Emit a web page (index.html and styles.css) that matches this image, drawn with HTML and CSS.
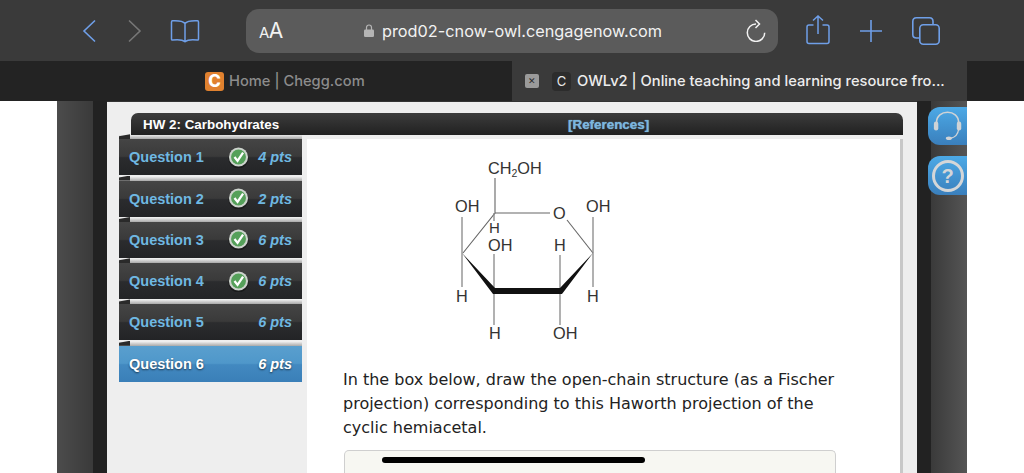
FILE: index.html
```html
<!DOCTYPE html>
<html lang="en">
<head>
<meta charset="UTF-8">
<meta name="viewport" content="width=device-width, initial-scale=1.0">
<title>OWLv2 | Online teaching and learning resource</title>
<link rel="stylesheet" href="styles.css">
</head>
<body>

<header class="toolbar">
  <div class="nav-icons">
    <svg class="icon-back" width="14" height="24" viewBox="0 0 14 24"><path d="M13 1.5 2 12l11 10.5" fill="none" stroke="#6f9fe8" stroke-width="1.6"/></svg>
    <svg class="icon-forward" width="14" height="24" viewBox="0 0 14 24"><path d="M1 1.5 12 12 1 22.5" fill="none" stroke="#777" stroke-width="1.6"/></svg>
    <svg class="icon-book" width="30" height="24" viewBox="0 0 30 24"><path d="M15 4.5C13 2 9 1.5 2.500 1.800Q1.500 1.900 1.500 3V20Q1.500 21.200 2.700 21.100C8 20.500 12.500 20.700 15 22.700C17.500 20.700 22 20.500 27.300 21.100Q28.500 21.200 28.500 20V3Q28.500 1.900 27.500 1.800C21 1.500 17 2 15 4.500ZM15 4.500V22.700" fill="none" stroke="#6f9fe8" stroke-width="1.500"/></svg>
  </div>
  <div class="url-bar">
    <span class="aa"><small>A</small>A</span>
    <div class="url">
      <svg width="10" height="13" viewBox="0 0 10 13"><path d="M2.500 6V3.500a2.500 2.500 0 0 1 5 0V6" fill="none" stroke="#b5b5b5" stroke-width="1.200"/><rect y="5.500" width="10" height="7.500" rx="1.300" fill="#b5b5b5"/></svg>
      <span>prod02-cnow-owl.cengagenow.com</span>
    </div>
    <svg class="icon-reload" width="20" height="23" viewBox="0 0 20 23"><path d="M10 5A8.700 8.700 0 1 0 18.700 13.700" fill="none" stroke="#f2f2f2" stroke-width="1.500"/><path d="M9.500 1 13.500 5 9.500 9" fill="none" stroke="#f2f2f2" stroke-width="1.500"/></svg>
  </div>
  <div class="action-icons">
    <svg width="24" height="30" viewBox="0 0 24 30"><path d="M7.500 10H3Q1 10 1 12V26.500Q1 28.500 3 28.500H21Q23 28.500 23 26.500V12Q23 10 21 10H16.500M12 19V1M7 5.500 12 1l5 4.500" fill="none" stroke="#6f9fe8" stroke-width="1.500"/></svg>
    <svg width="22" height="22" viewBox="0 0 22 22"><path d="M11 0V22M0 11H22" fill="none" stroke="#6f9fe8" stroke-width="1.600"/></svg>
    <svg width="28" height="28" viewBox="0 0 28 28"><rect x="7.800" y="7.800" width="19.400" height="19.400" rx="3.500" fill="none" stroke="#6f9fe8" stroke-width="1.600"/><path d="M7.500 21H4.500Q.8 21 .8 17.500V4.500Q.8.800 4.500.8H17.500Q21 .8 21 4.500V7.500" fill="none" stroke="#6f9fe8" stroke-width="1.600"/></svg>
  </div>
</header>

<nav class="tabs">
  <div class="tab tab-home">
    <span class="favicon-chegg">C</span>
    <span>Home | Chegg.com</span>
  </div>
  <div class="tab tab-active">
    <span class="tab-close">&#10005;</span>
    <span class="favicon-owl">C</span>
    <span>OWLv2 | Online teaching and learning resource fro...</span>
  </div>
</nav>

<div class="site">
  <div class="site-inner">
    <div class="panel">
      <div class="hw-bar">
        <span class="hw-title">HW 2: Carbohydrates</span>
        <span class="hw-refs">[References]</span>
      </div>
      <div class="panel-body">
        <ul class="questions">
          <li class="question"><span class="q-name">Question 1</span><svg class="check" viewBox="0 0 22 22"><use href="#check-mark"/></svg><span class="q-pts">4 pts</span></li>
          <li class="question"><span class="q-name">Question 2</span><svg class="check" viewBox="0 0 22 22"><use href="#check-mark"/></svg><span class="q-pts">2 pts</span></li>
          <li class="question"><span class="q-name">Question 3</span><svg class="check" viewBox="0 0 22 22"><use href="#check-mark"/></svg><span class="q-pts">6 pts</span></li>
          <li class="question"><span class="q-name">Question 4</span><svg class="check" viewBox="0 0 22 22"><use href="#check-mark"/></svg><span class="q-pts">6 pts</span></li>
          <li class="question"><span class="q-name">Question 5</span><span class="q-pts">6 pts</span></li>
          <li class="question current"><span class="q-name">Question 6</span><span class="q-pts">6 pts</span></li>
        </ul>
        <main class="content">
          <svg class="haworth" width="200" height="200" viewBox="0 0 200 200">
            <g fill="none" stroke="#666" stroke-width="1.100">
              <path d="M65 28V63L33 103"/>
              <path d="M65 63H120"/>
              <path d="M137 70 163 103"/>
            </g>
            <g fill="none" stroke="#888" stroke-width="1.300">
              <path d="M32 67V137M163 67V137"/>
              <path d="M64 63V71M64 104V141M130 105V141"/>
              <path d="M64 143V175M130 143V175"/>
            </g>
            <path d="M32 103 65 138H130L163 103 132 144H63Z" fill="#111"/>
            <g class="atom">
              <text x="58" y="24">CH<tspan class="sub" dy="3">2</tspan><tspan dy="-3">OH</tspan></text>
              <text x="25" y="62">OH</text>
              <text x="123" y="69">O</text>
              <text x="156" y="62">OH</text>
              <text class="atom-small" x="59" y="83">H</text>
              <text x="58" y="101">OH</text>
              <text x="124" y="101">H</text>
              <text x="26" y="152">H</text>
              <text x="157" y="152">H</text>
              <text x="59" y="189">H</text>
              <text x="123" y="189">OH</text>
            </g>
          </svg>
          <p class="prompt">In the box below, draw the open-chain structure (as a Fischer projection) corresponding to this Haworth projection of the cyclic hemiacetal.</p>
          <div class="answer-box"><div class="answer-bar"></div></div>
        </main>
      </div>
    </div>
  </div>
</div>

<a class="side-btn side-support">
  <svg width="30" height="30" viewBox="0 0 34 34"><path d="M4 18V13C4 5.500 10 1.500 16.500 1.500S29 5.500 29 13V18" fill="none" stroke="#cfd3d6" stroke-width="1.800"/><rect x="1" y="12" width="5" height="10" rx="2.500" fill="#cfd3d6"/><rect x="27" y="12" width="5" height="10" rx="2.500" fill="#cfd3d6"/><path d="M29 21Q28 29 20 31" fill="none" stroke="#cfd3d6" stroke-width="1.500"/><ellipse cx="18" cy="31" rx="3.500" ry="2" fill="#cfd3d6"/></svg>
</a>
<a class="side-btn side-help"><span class="help-mark">?</span></a>

<svg class="defs" width="0" height="0">
  <defs>
    <g id="check-mark">
      <circle cx="11" cy="12" r="10.500" fill="#111" opacity=".55"/>
      <circle cx="11" cy="10.500" r="10" fill="#CDD3CD"/>
      <circle cx="11" cy="10.500" r="7.800" fill="#55A05A"/>
      <path d="M6.800 10.500 10 14.500 15.800 6" fill="none" stroke="#fff" stroke-width="2.400"/>
    </g>
  </defs>
</svg>

</body>
</html>
```

FILE: styles.css
```css
* {
  box-sizing: border-box;
}

html, body {
  height: 100%;
}

body {
  margin: 0;
  overflow: hidden;
  background-color: #FFFFFF;
  font-family: "Liberation Sans", Arial, sans-serif;
}

/* browser chrome */
.toolbar {
  display: flex;
  align-items: center;
  height: 61px;
  padding-left: 82px;
  background-color: #3A3A3A;
}

.nav-icons {
  display: flex;
  align-items: center;
  width: 164px;
}

.nav-icons svg {
  display: block;
}

.icon-forward {
  margin-left: 32px;
}

.icon-book {
  margin-left: 28px;
}

.url-bar {
  display: flex;
  align-items: center;
  width: 532px;
  height: 44px;
  padding: 0 12px 0 13px;
  border-radius: 13px;
  background-color: #5B5B5B;
  color: #F2F2F2;
}

.aa {
  width: 105px;
  font-family: Inter, sans-serif;
  font-size: 21px;
  letter-spacing: -0.5px;
}

.aa small {
  font-size: 15px;
}

.url {
  display: flex;
  align-items: center;
  gap: 8px;
  flex: 1;
  font-family: Inter, sans-serif;
  font-size: 16.300px;
}

.icon-reload {
  flex: none;
}

.action-icons {
  display: flex;
  align-items: center;
  gap: 30px;
  margin-left: 28px;
}

.action-icons svg:first-child {
  margin-bottom: 2px;
}

.tabs {
  display: flex;
  height: 40px;
  background-color: #232323;
  font-family: Inter, sans-serif;
  font-size: 14.700px;
  font-weight: 500;
}

.tab {
  display: flex;
  align-items: center;
}

.tab-home {
  width: 512px;
  padding-left: 205px;
  gap: 5px;
  color: #8C8C8C;
}

.favicon-chegg {
  width: 19px;
  height: 19px;
  border-radius: 3px;
  background-color: #E0812F;
  color: #FFFFFF;
  font-size: 17px;
  font-weight: 800;
  line-height: 19px;
  text-align: center;
}

.tab-active {
  width: 455px;
  padding-left: 13px;
  background-color: #3A3A3A;
  color: #EDEDED;
}

.tab-close {
  width: 14px;
  height: 14px;
  margin-right: 13px;
  border-radius: 2px;
  background-color: #9A9A9A;
  color: #2A2A2A;
  font-size: 9px;
  line-height: 14px;
  text-align: center;
}

.favicon-owl {
  width: 19px;
  height: 19px;
  margin-right: 6px;
  border-radius: 4px;
  background-color: #2C2C2C;
  color: #E8E8E8;
  font-size: 13px;
  font-weight: 400;
  line-height: 19px;
  text-align: center;
}

/* page */
.site {
  width: 910px;
  height: 372px;
  margin-left: 57px;
  padding: 0 36px;
  background: linear-gradient(90deg, #4C4C4C 0, #3A3A3A 36px, #3A3A3A 874px, #555555 100%);
}

.site-inner {
  height: 100%;
  padding: 0 14px;
  background-color: #222222;
}

.panel {
  height: 100%;
  padding: 12px 14px 0 12px;
  border-top: 1px solid #333333;
  background-color: #EEEEEE;
}

.hw-bar {
  display: flex;
  align-items: center;
  height: 22px;
  margin-top: -1px;
  margin-left: 12px;
  padding-left: 12px;
  border-radius: 7px 7px 0 0;
  background: linear-gradient(#3C3C3C, #212121);
  font-weight: bold;
}

.hw-title {
  width: 425px;
  color: #FFFFFF;
  font-size: 13.400px;
}

.hw-refs {
  color: #7BB6DE;
  font-size: 13.400px;
  text-shadow: 0 0 1px #7BB6DE;
}

.panel-body {
  display: flex;
  align-items: flex-start;
  margin-top: -1px;
}

.questions {
  flex: none;
  width: 183px;
  margin: 0;
  padding: 0;
  list-style: none;
}

.question {
  position: relative;
  display: flex;
  align-items: center;
  height: 36px;
  margin-top: 5.3px;
  padding: 0 10px;
  background: linear-gradient(#454545 0, #3A3A3A 48%, #2B2C2E 52%, #232426 100%);
  color: #6FB8E2;
  font-size: 14.500px;
  font-weight: bold;
}

/* little folded corner above each row */
.question::before {
  content: "";
  position: absolute;
  left: 0;
  right: 0;
  top: -4px;
  height: 4px;
  background: linear-gradient(#E8E8E8, #A9A9A9);
}

.question::after {
  content: "";
  position: absolute;
  left: 0;
  top: -5px;
  width: 11px;
  height: 5px;
  background-color: #2A2A2A;
  clip-path: polygon(0 40%, 100% 0, 100% 100%, 0 100%);
}

.question.current {
  background: linear-gradient(#599FCE 0, #4F97CA 48%, #4289C0 52%, #3A7FB8 100%);
  color: #FFFFFF;
  text-shadow: 0 1px 2px rgba(0, 0, 0, 0.6);
}

.q-name {
  flex: 1;
}

.q-pts {
  margin-left: 9px;
  font-style: italic;
}

.check {
  width: 21px;
  height: 21px;
}

.content {
  flex: 1;
  height: 335px;
  margin: 5px 3px 0 5px;
  overflow: hidden;
  background-color: #FFFFFF;
  box-shadow: 3px 0 0 #C8C8C8;
}

.haworth {
  display: block;
  margin: 11px 0 0 123px;
}

.atom text {
  fill: #333333;
  font-family: "Liberation Sans", Arial, sans-serif;
  font-size: 16.300px;
}

.atom .atom-small {
  font-size: 15px;
}

.atom .sub {
  font-size: 10.500px;
}

.prompt {
  width: 500px;
  margin: 18px 0 0 36px;
  color: #222222;
  font-family: "DejaVu Sans", Verdana, sans-serif;
  font-size: 16px;
  line-height: 24px;
}

.answer-box {
  width: 492px;
  height: 24px;
  margin: 10px 0 0 37px;
  padding: 6px 0 0 37px;
  border: 1px solid #CFCFCF;
  border-bottom: 0;
  border-radius: 5px 5px 0 0;
  background-color: #F7F7F2;
}

.answer-bar {
  width: 263px;
  height: 6px;
  border-radius: 3px;
  background-color: #000000;
}

.side-btn {
  position: absolute;
  left: 928px;
  display: flex;
  align-items: center;
  justify-content: center;
  width: 39px;
  border-radius: 12px 0 0 12px;
  background: linear-gradient(#4CA9E6, #3A7FBC);
}

.side-support {
  top: 107px;
  height: 38px;
}

.side-help {
  top: 156px;
  height: 39px;
}

.help-mark {
  width: 32px;
  height: 32px;
  border: 3px solid #D4D6D8;
  border-radius: 50%;
  color: #D4D6D8;
  font-size: 20px;
  font-weight: bold;
  line-height: 26px;
  text-align: center;
}

.defs {
  position: absolute;
}
```
